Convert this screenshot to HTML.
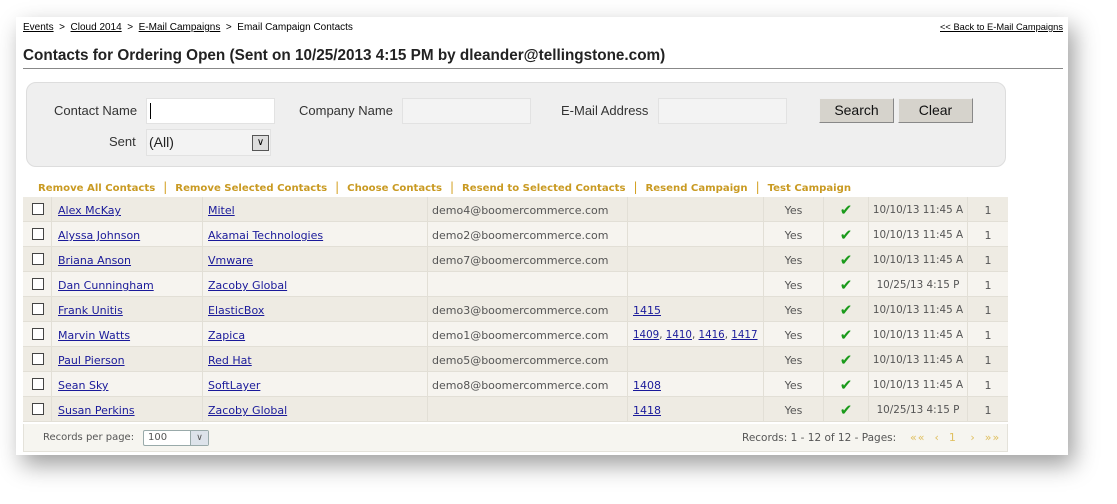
<!DOCTYPE html>
<html><head><meta charset="utf-8"><style>
*{margin:0;padding:0;box-sizing:border-box}
body{width:1117px;height:504px;background:#fff;position:relative;overflow:hidden;font-family:"Liberation Sans",Arial,sans-serif}
.panel{position:absolute;left:16px;top:17px;width:1052px;height:438px;background:#fff;box-shadow:6px 10px 22px rgba(0,0,0,.38)}
.a{position:absolute;white-space:nowrap}
.bc{font-size:10px;color:#000;top:22px}
.bc u{color:#000}
.title{left:23px;top:47px;font-size:15.3px;font-weight:bold;color:#222}
.hr{position:absolute;left:23px;top:68px;width:1040px;height:1px;background:#888}
.search{position:absolute;left:26px;top:82px;width:980px;height:85px;background:#efefef;border:1px solid #ddd;border-radius:10px}
.lbl{font-size:13px;color:#333}
.inp{position:absolute;height:26px;border:1px solid #e2e2e2;background:#f3f3f3}
.btn{position:absolute;top:98px;height:25px;background:#d6d3cc;border:1px solid #888;border-top-color:#eee;border-left-color:#eee;font-size:14px;color:#111;text-align:center;line-height:23px}
.act{top:180px;font-family:"DejaVu Sans",Verdana,sans-serif;font-weight:bold;font-size:10.1px;color:#c99a22;left:38px}
.act span{color:#d4a020;margin:0 8px;font-size:12px;font-weight:normal}
.tbl{position:absolute;left:23px;top:197px;width:985px}
.row{position:absolute;left:0;width:985px;height:25px;border-bottom:1px solid #e2dfd6;font-family:"DejaVu Sans",Tahoma,sans-serif;font-size:11px;color:#555}
.row div{position:absolute;top:0;height:25px;line-height:27px;border-right:1px solid #e2dfd6;white-space:nowrap}
.row div:nth-child(8){font-size:10.4px}
.row a{color:#1a1a9a;text-decoration:underline}
.cb{display:inline-block;width:12px;height:12px;border:1px solid #444;background:#fff;margin:6px 0 0 9px;vertical-align:top}
.ck{color:#1a9a1a;font-size:15px;font-weight:bold}
.foot{position:absolute;left:23px;top:424px;width:985px;height:28px;background:#f6f5f0;border:1px solid #e4e2da;border-top:0;font-family:"DejaVu Sans",Tahoma,sans-serif;font-size:10px;color:#555}
</style></head><body>
<div class="panel"></div>
<div class="a bc" style="left:23px"><u>Events</u> &nbsp;&gt;&nbsp; <u>Cloud 2014</u> &nbsp;&gt;&nbsp; <u>E-Mail Campaigns</u> &nbsp;&gt;&nbsp; Email Campaign Contacts</div>
<div class="a bc" style="left:940px;font-size:9.3px"><u>&lt;&lt; Back to E-Mail Campaigns</u></div>
<div class="a title">Contacts for Ordering Open (Sent on 10/25/2013 4:15 PM by dleander@tellingstone.com)</div>
<div class="hr"></div>
<div class="search"></div>
<div class="a lbl" style="left:54px;top:103px">Contact Name</div>
<div class="inp" style="left:146px;top:98px;width:129px;background:#fff"><div style="position:absolute;left:3px;top:4px;width:1px;height:16px;background:#000"></div></div>
<div class="a lbl" style="left:299px;top:103px">Company Name</div>
<div class="inp" style="left:402px;top:98px;width:129px"></div>
<div class="a lbl" style="left:561px;top:103px">E-Mail Address</div>
<div class="inp" style="left:658px;top:98px;width:129px"></div>
<div class="btn" style="left:819px;width:75px">Search</div>
<div class="btn" style="left:898px;width:75px">Clear</div>
<div class="a lbl" style="left:109px;top:134px">Sent</div>
<div class="inp" style="left:146px;top:129px;width:125px;height:27px"><span style="position:absolute;left:2px;top:4px;font-size:14px;color:#222">(All)</span><div style="position:absolute;left:105px;top:5px;width:17px;height:16px;border:1px solid #555;background:#ddd;font-size:10px;text-align:center;line-height:14px">&#8744;</div></div>
<div class="a act">Remove All Contacts<span>|</span>Remove Selected Contacts<span>|</span>Choose Contacts<span>|</span>Resend to Selected Contacts<span>|</span>Resend Campaign<span>|</span>Test Campaign</div>
<div class="tbl">
<div class="row" style="top:0;background:#eeebe3"><div style="left:0;width:29px"><span class="cb"></span></div><div style="left:29px;width:151px;padding-left:6px"><a>Alex McKay</a></div><div style="left:180px;width:225px;padding-left:5px"><a>Mitel</a></div><div style="left:405px;width:200px;padding-left:4px">demo4@boomercommerce.com</div><div style="left:605px;width:136px;padding-left:5px"></div><div style="left:741px;width:60px;text-align:center">Yes</div><div style="left:801px;width:45px;text-align:center" class="ck">✔</div><div style="left:846px;width:99px;text-align:center">10/10/13 11:45 A</div><div style="left:945px;width:40px;text-align:center;border:0">1</div></div>
<div class="row" style="top:25px;background:#f6f4ef"><div style="left:0;width:29px"><span class="cb"></span></div><div style="left:29px;width:151px;padding-left:6px"><a>Alyssa Johnson</a></div><div style="left:180px;width:225px;padding-left:5px"><a>Akamai Technologies</a></div><div style="left:405px;width:200px;padding-left:4px">demo2@boomercommerce.com</div><div style="left:605px;width:136px;padding-left:5px"></div><div style="left:741px;width:60px;text-align:center">Yes</div><div style="left:801px;width:45px;text-align:center" class="ck">✔</div><div style="left:846px;width:99px;text-align:center">10/10/13 11:45 A</div><div style="left:945px;width:40px;text-align:center;border:0">1</div></div>
<div class="row" style="top:50px;background:#eeebe3"><div style="left:0;width:29px"><span class="cb"></span></div><div style="left:29px;width:151px;padding-left:6px"><a>Briana Anson</a></div><div style="left:180px;width:225px;padding-left:5px"><a>Vmware</a></div><div style="left:405px;width:200px;padding-left:4px">demo7@boomercommerce.com</div><div style="left:605px;width:136px;padding-left:5px"></div><div style="left:741px;width:60px;text-align:center">Yes</div><div style="left:801px;width:45px;text-align:center" class="ck">✔</div><div style="left:846px;width:99px;text-align:center">10/10/13 11:45 A</div><div style="left:945px;width:40px;text-align:center;border:0">1</div></div>
<div class="row" style="top:75px;background:#f6f4ef"><div style="left:0;width:29px"><span class="cb"></span></div><div style="left:29px;width:151px;padding-left:6px"><a>Dan Cunningham</a></div><div style="left:180px;width:225px;padding-left:5px"><a>Zacoby Global</a></div><div style="left:405px;width:200px;padding-left:4px"></div><div style="left:605px;width:136px;padding-left:5px"></div><div style="left:741px;width:60px;text-align:center">Yes</div><div style="left:801px;width:45px;text-align:center" class="ck">✔</div><div style="left:846px;width:99px;text-align:center">10/25/13 4:15 P</div><div style="left:945px;width:40px;text-align:center;border:0">1</div></div>
<div class="row" style="top:100px;background:#eeebe3"><div style="left:0;width:29px"><span class="cb"></span></div><div style="left:29px;width:151px;padding-left:6px"><a>Frank Unitis</a></div><div style="left:180px;width:225px;padding-left:5px"><a>ElasticBox</a></div><div style="left:405px;width:200px;padding-left:4px">demo3@boomercommerce.com</div><div style="left:605px;width:136px;padding-left:5px"><a>1415</a></div><div style="left:741px;width:60px;text-align:center">Yes</div><div style="left:801px;width:45px;text-align:center" class="ck">✔</div><div style="left:846px;width:99px;text-align:center">10/10/13 11:45 A</div><div style="left:945px;width:40px;text-align:center;border:0">1</div></div>
<div class="row" style="top:125px;background:#f6f4ef"><div style="left:0;width:29px"><span class="cb"></span></div><div style="left:29px;width:151px;padding-left:6px"><a>Marvin Watts</a></div><div style="left:180px;width:225px;padding-left:5px"><a>Zapica</a></div><div style="left:405px;width:200px;padding-left:4px">demo1@boomercommerce.com</div><div style="left:605px;width:136px;padding-left:5px;font-size:10.3px"><a>1409</a>, <a>1410</a>, <a>1416</a>, <a>1417</a></div><div style="left:741px;width:60px;text-align:center">Yes</div><div style="left:801px;width:45px;text-align:center" class="ck">✔</div><div style="left:846px;width:99px;text-align:center">10/10/13 11:45 A</div><div style="left:945px;width:40px;text-align:center;border:0">1</div></div>
<div class="row" style="top:150px;background:#eeebe3"><div style="left:0;width:29px"><span class="cb"></span></div><div style="left:29px;width:151px;padding-left:6px"><a>Paul Pierson</a></div><div style="left:180px;width:225px;padding-left:5px"><a>Red Hat</a></div><div style="left:405px;width:200px;padding-left:4px">demo5@boomercommerce.com</div><div style="left:605px;width:136px;padding-left:5px"></div><div style="left:741px;width:60px;text-align:center">Yes</div><div style="left:801px;width:45px;text-align:center" class="ck">✔</div><div style="left:846px;width:99px;text-align:center">10/10/13 11:45 A</div><div style="left:945px;width:40px;text-align:center;border:0">1</div></div>
<div class="row" style="top:175px;background:#f6f4ef"><div style="left:0;width:29px"><span class="cb"></span></div><div style="left:29px;width:151px;padding-left:6px"><a>Sean Sky</a></div><div style="left:180px;width:225px;padding-left:5px"><a>SoftLayer</a></div><div style="left:405px;width:200px;padding-left:4px">demo8@boomercommerce.com</div><div style="left:605px;width:136px;padding-left:5px"><a>1408</a></div><div style="left:741px;width:60px;text-align:center">Yes</div><div style="left:801px;width:45px;text-align:center" class="ck">✔</div><div style="left:846px;width:99px;text-align:center">10/10/13 11:45 A</div><div style="left:945px;width:40px;text-align:center;border:0">1</div></div>
<div class="row" style="top:200px;background:#eeebe3"><div style="left:0;width:29px"><span class="cb"></span></div><div style="left:29px;width:151px;padding-left:6px"><a>Susan Perkins</a></div><div style="left:180px;width:225px;padding-left:5px"><a>Zacoby Global</a></div><div style="left:405px;width:200px;padding-left:4px"></div><div style="left:605px;width:136px;padding-left:5px"><a>1418</a></div><div style="left:741px;width:60px;text-align:center">Yes</div><div style="left:801px;width:45px;text-align:center" class="ck">✔</div><div style="left:846px;width:99px;text-align:center">10/25/13 4:15 P</div><div style="left:945px;width:40px;text-align:center;border:0">1</div></div>
</div>
<div class="foot">
<span class="a" style="left:19px;top:8px">Records per page:</span>
<div class="a" style="left:119px;top:6px;width:66px;height:16px;border:1px solid #9aa;border-radius:2px;background:#fff;font-size:10px;line-height:14px;padding-left:4px">100<span style="position:absolute;right:0;top:0;width:18px;height:14px;border-left:1px solid #9aa;background:#dde3ea;text-align:center;font-size:9px">&#8744;</span></div>
<span class="a" style="left:718px;top:8px;font-size:10.5px">Records: 1 - 12 of 12 - Pages:</span>
<span class="a" style="left:886px;top:7px;color:#e0c060;font-size:11px;letter-spacing:1px">«« &nbsp;‹ &nbsp;1 &nbsp;&nbsp;› &nbsp;»»</span>
</div>
</body></html>
